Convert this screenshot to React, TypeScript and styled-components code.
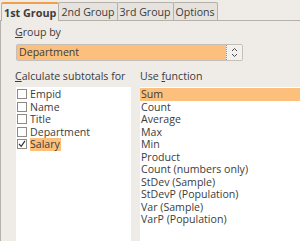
import React from "react";
import styled, { createGlobalStyle } from "styled-components";

const Global = createGlobalStyle`
  html, body {
    margin: 0;
    padding: 0;
    background: #efebe7;
    overflow: hidden;
  }
  body {
    font-family: "Open Sans", "DejaVu Sans", sans-serif;
    font-size: 10.6px;
    color: #3c3c3c;
  }
`;

const Window = styled.div`
  width: 300px;
  height: 241px;
  display: flex;
  flex-direction: column;
`;

const TabBar = styled.div`
  display: flex;
  align-items: flex-end;
  height: 20px;
  border-bottom: 1px solid #b5b0aa;
  padding-left: 1px;
`;

const Tab = styled.div<{ $active?: boolean }>`
  height: ${(p) => (p.$active ? "19px" : "18px")};
  box-sizing: border-box;
  padding: 0 ${(p) => (p.$active ? "2px" : "2px")};
  display: flex;
  align-items: center;
  border: 1px solid #b5b0aa;
  border-bottom: none;
  border-top: ${(p) => (p.$active ? "2px solid #f0a04a" : "1px solid #b5b0aa")};
  border-radius: 2px 2px 0 0;
  background: ${(p) => (p.$active ? "#efebe7" : "#e6e2dd")};
  font-weight: ${(p) => (p.$active ? 700 : 400)};
  font-size: ${(p) => (p.$active ? "10.8px" : "10.6px")};
  margin-bottom: ${(p) => (p.$active ? "-1px" : "0")};
  margin-right: -1px;
  white-space: nowrap;
  position: relative;
`;

const Panel = styled.div`
  flex: 1;
  border-left: 1px solid #b5b0aa;
  padding: 4px 0 0 14px;
  display: flex;
  flex-direction: column;
`;

const Label = styled.div`
  height: 14px;
  line-height: 14px;
  u {
    text-decoration: underline;
  }
`;

const Select = styled.div`
  margin-top: 5px;
  width: 227px;
  height: 17px;
  box-sizing: border-box;
  display: flex;
  border: 1px solid #c4bfb9;
  border-radius: 2px;
  margin-left: 1px;
`;

const SelectValue = styled.div`
  flex: 1;
  background: #fdc07c;
  padding-left: 2px;
  line-height: 15px;
`;

const Spinner = styled.div`
  width: 15px;
  border-left: 1px dotted #9c9690;
  background: #f3f1ee;
  display: flex;
  align-items: center;
  justify-content: center;
`;

const Columns = styled.div`
  margin-top: 8px;
  display: grid;
  grid-template-columns: 116px 1fr;
  column-gap: 9px;
  flex: 1;
`;

const Column = styled.div`
  display: flex;
  flex-direction: column;
`;

const ListBox = styled.div<{ $indent?: number }>`
  margin-top: 4px;
  margin-left: ${(p) => p.$indent ?? 0}px;
  background: #ffffff;
  flex: 1;
  padding-top: 1px;
`;

const Row = styled.div<{ $selected?: boolean }>`
  height: 12.5px;
  line-height: 12.5px;
  padding-left: 1px;
  background: ${(p) => (p.$selected ? "#fdc07c" : "transparent")};
  white-space: nowrap;
`;

const CheckRow = styled.div`
  height: 12.5px;
  display: flex;
  align-items: center;
  padding-left: 1px;
  gap: 3px;
`;

const Box = styled.span`
  width: 10px;
  height: 10px;
  box-sizing: border-box;
  border: 1px solid #8f8a85;
  background: #fff;
  display: inline-flex;
  align-items: center;
  justify-content: center;
`;

const CheckText = styled.span<{ $selected?: boolean }>`
  background: ${(p) => (p.$selected ? "#fdc07c" : "transparent")};
  line-height: 12.5px;
  padding-right: 1px;
`;

const fields = ["Empid", "Name", "Title", "Department", "Salary"];
const functions = [
  "Sum",
  "Count",
  "Average",
  "Max",
  "Min",
  "Product",
  "Count (numbers only)",
  "StDev (Sample)",
  "StDevP (Population)",
  "Var (Sample)",
  "VarP (Population)",
];

export default function App() {
  return (
    <Window>
      <Global />
      <TabBar>
        <Tab $active>1st Group</Tab>
        <Tab>2nd Group</Tab>
        <Tab>3rd Group</Tab>
        <Tab>Options</Tab>
      </TabBar>
      <Panel>
        <Label>
          <u>G</u>roup by
        </Label>
        <Select>
          <SelectValue>Department</SelectValue>
          <Spinner>
            <svg width="7" height="11" viewBox="0 0 7 11">
              <path d="M1 4 L3.5 1.5 L6 4 M1 7 L3.5 9.5 L6 7" fill="none" stroke="#4a4a4a" strokeWidth="1" />
            </svg>
          </Spinner>
        </Select>
        <Columns>
          <Column>
            <Label>
              <u>C</u>alculate subtotals for
            </Label>
            <ListBox $indent={1}>
              {fields.map((f) => (
                <CheckRow key={f}>
                  <Box>
                    {f === "Salary" && (
                      <svg width="8" height="8" viewBox="0 0 8 8">
                        <path d="M1 4 L3.2 6.3 L7 0.8" fill="none" stroke="#333" strokeWidth="1.2" />
                      </svg>
                    )}
                  </Box>
                  <CheckText $selected={f === "Salary"}>{f}</CheckText>
                </CheckRow>
              ))}
            </ListBox>
          </Column>
          <Column>
            <Label>
              Use <u>f</u>unction
            </Label>
            <ListBox>
              {functions.map((f, i) => (
                <Row key={f} $selected={i === 0}>
                  {f}
                </Row>
              ))}
            </ListBox>
          </Column>
        </Columns>
      </Panel>
    </Window>
  );
}
